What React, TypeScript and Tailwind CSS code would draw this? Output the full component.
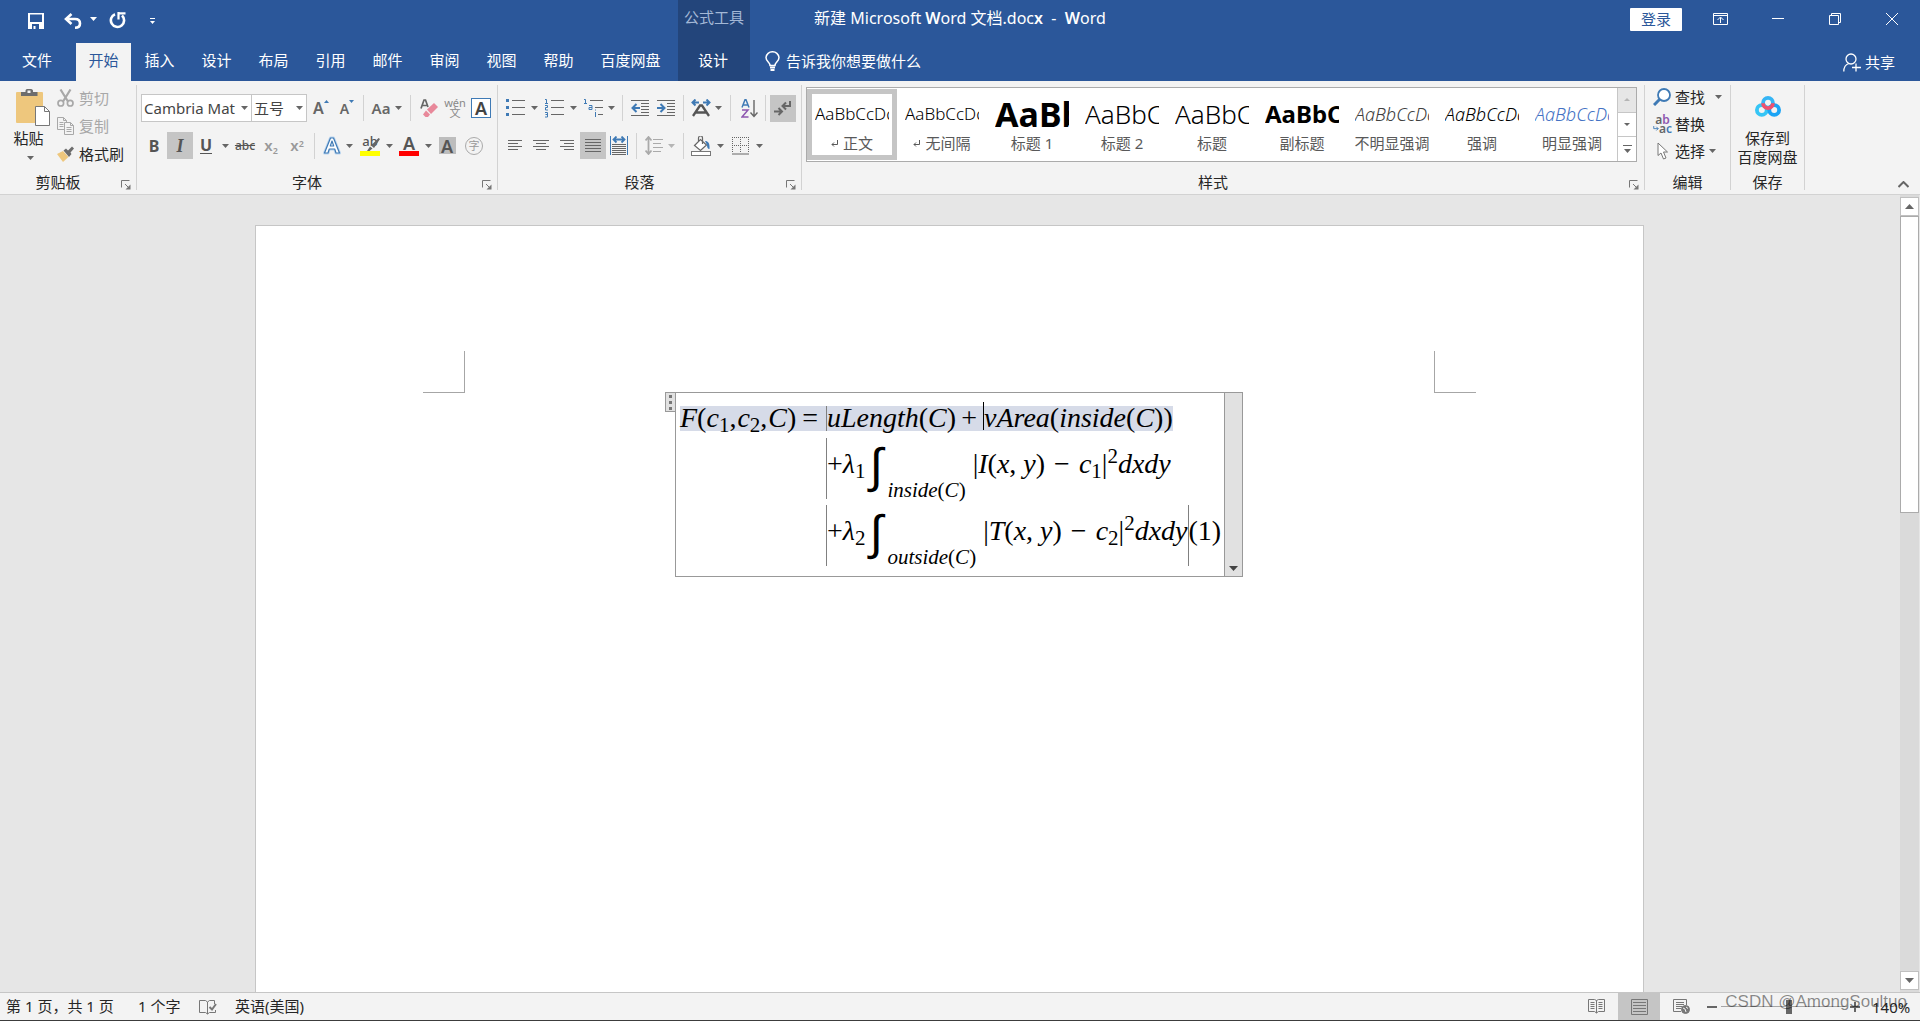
import React from "react";

const cjk = "font-['Noto_Sans','Noto_Sans_CJK_SC',sans-serif]";

/* ---------- shared pieces ---------- */

function Caret({ className = "text-[#666]" }: { className?: string }) {
  return (
    <svg width="7" height="4" viewBox="0 0 7 4" className={className} aria-hidden="true">
      <path d="M0 0h7L3.5 4z" fill="currentColor" />
    </svg>
  );
}

function Tool({ label, className = "w-[26px]", children }: { label: string; className?: string; children: React.ReactNode }) {
  return (
    <button aria-label={label} className={`flex h-[27px] shrink-0 items-center justify-center ${className}`}>
      {children}
    </button>
  );
}

function Drop({ label, className = "w-3", tone }: { label: string; className?: string; tone?: string }) {
  return (
    <Tool label={label} className={className}>
      <Caret className={tone} />
    </Tool>
  );
}

function Sep({ className }: { className: string }) {
  return <div className={`h-[26px] w-px shrink-0 bg-[#d2d2d2] ${className}`} />;
}

function Group({ name, className, launcher = true, children }: { name: string; className: string; launcher?: boolean; children: React.ReactNode }) {
  return (
    <section aria-label={name} className={`flex shrink-0 flex-col ${className}`}>
      <div className="flex-1">{children}</div>
      <div className="flex h-[23px] items-center">
        <span className="flex-1 pb-[2px] text-center leading-5">{name}</span>
        {launcher && (
          <button aria-label={`${name}选项`} className="flex w-5 justify-center pt-1">
            <svg width="10" height="10" viewBox="0 0 10 10" fill="none" stroke="#777">
              <path d="M.5 7.5v-7h8M4 4l4 4" />
              <path d="M9.500 4.500v5h-5z" fill="#777" stroke="none" />
            </svg>
          </button>
        )}
      </div>
    </section>
  );
}

function Divider() {
  return <div className="my-1 w-px shrink-0 bg-[#d2d2d2]" />;
}

/* ---------- title bar and tabs ---------- */

function TitleBar() {
  return (
    <div className="grid h-[43px] grid-cols-[1fr_auto_1fr]">
      <div className="flex min-w-0">
        <div className="flex w-[678px] shrink-0 items-center pb-[2px] pl-7">
          <button aria-label="保存">
            <svg width="16" height="16" viewBox="0 0 16 16">
              <path fillRule="evenodd" fill="#fff" d="M0 0h16v16H0zM2 1.500v7.500h12V1.500zM4 11v5h1.500v-3h2v3H11v-5z" />
            </svg>
          </button>
          <button aria-label="撤消" className="ml-5">
            <svg width="18" height="16" viewBox="0 0 18 16" fill="none" stroke="#fff" strokeWidth="2.600">
              <path d="M2 6h9c3 0 5 1.500 5 4.500S14 14.700 11 14.700" />
              <path d="M7.500 1 2 6l5.500 5" />
            </svg>
          </button>
          <button aria-label="撤消选项" className="ml-2 pb-1">
            <Caret className="text-white" />
          </button>
          <button aria-label="重复" className="ml-3">
            <svg width="18" height="17" viewBox="0 0 18 17" fill="none" stroke="#fff" strokeWidth="2.600">
              <path d="M6 2.200A6.600 6.600 0 1 0 13 3.500" />
              <path d="M9.500 0v7.500M8.500 1.300h8" strokeWidth="2.200" />
            </svg>
          </button>
          <button aria-label="自定义快速访问工具栏" className="ml-[23px] flex flex-col items-center gap-[2px]">
            <span className="h-px w-[5px] bg-white" />
            <svg width="5" height="3" viewBox="0 0 5 3"><path d="M0 0h5L2.500 3z" fill="#fff" /></svg>
          </button>
        </div>
        <div className="flex w-[72px] shrink-0 justify-center bg-[#23457b] pt-[7px] leading-5 text-[#a3b8d6]">
          <span className="whitespace-nowrap">公式工具</span>
        </div>
      </div>
      <h1 className="whitespace-pre pt-2 text-base leading-5 text-white">
        新建 Microsoft <b className="font-semibold">W</b>ord 文档.doc<b className="font-semibold">x</b>  -  <b className="font-semibold">W</b>ord
      </h1>
      <div className="flex h-[38px] items-center justify-end">
        <button className="mr-[10px] h-[23px] w-[52px] rounded-[1px] bg-white leading-5 text-[#2b579a]">登录</button>
        <button aria-label="功能区显示选项" className="flex w-[57px] justify-center">
          <svg width="15" height="12" viewBox="0 0 15 12" fill="none" stroke="#fff"><path d="M.5.5h14v11H.5zM.5 2.500h14M7.500 10V4.500M4.500 7l3-3 3 3" /></svg>
        </button>
        <button aria-label="最小化" className="flex w-[57px] justify-center">
          <svg width="12" height="12" viewBox="0 0 12 12" stroke="#fff"><path d="M0 5.500h12" /></svg>
        </button>
        <button aria-label="向下还原" className="flex w-[57px] justify-center">
          <svg width="12" height="12" viewBox="0 0 12 12" fill="none" stroke="#fff"><path d="M.5 2.500h9v9h-9zM2.500 2.500v-2h9v9h-2" /></svg>
        </button>
        <button aria-label="关闭" className="flex w-[57px] justify-center">
          <svg width="12" height="12" viewBox="0 0 12 12" stroke="#fff"><path d="M0 0l12 12M12 0 0 12" /></svg>
        </button>
      </div>
    </div>
  );
}

function TabBar() {
  const tabs = ["插入", "设计", "布局", "引用", "邮件", "审阅", "视图", "帮助", "百度网盘"];
  return (
    <nav className="flex h-[38px] items-stretch leading-5 text-white">
      <button className="w-[76px] pb-1 pr-[2px]">文件</button>
      <button className="w-[55px] bg-[#f3f3f3] pb-1 text-[#2b579a]">开始</button>
      {tabs.map((t) => (
        <button key={t} className={`whitespace-nowrap pb-1 ${t.length > 2 ? "w-[87px]" : "w-[57px]"}`}>{t}</button>
      ))}
      <button className="ml-1 w-[72px] bg-[#23457b] pb-1 pr-[2px]">设计</button>
      <button className="ml-[15px] flex items-center gap-[6px] pb-[2px]">
        <svg width="15" height="20" viewBox="0 0 15 20" fill="none" stroke="#fff" strokeWidth="1.500">
          <path d="M5 14.500c0-3-4-4-4-8A6.300 6.300 0 0 1 7.500.8 6.300 6.300 0 0 1 14 6.500c0 4-4 5-4 8z" />
          <path d="M5 16.500h5M5.500 19h4" strokeWidth="2" />
        </svg>
        告诉我你想要做什么
      </button>
      <button className="ml-auto mr-[25px] flex items-center gap-1">
        <svg width="18" height="19" viewBox="0 0 18 19" fill="none" stroke="#fff" strokeWidth="1.300">
          <circle cx="8" cy="6" r="5" />
          <path d="M.8 18.500c0-4 2-7 5-8M13 10.500v8M9 14.500h9" />
        </svg>
        共享
      </button>
    </nav>
  );
}

/* ---------- ribbon groups ---------- */

function Clipboard() {
  return (
    <Group name="剪贴板" className="w-[136px]">
      <div className="flex">
        <button className="flex w-[57px] flex-col items-center pt-[7px]">
          <svg width="36" height="38" viewBox="0 0 36 38" className="ml-2">
            <rect x="1" y="4" width="27" height="31" rx="1" fill="#eec77d" />
            <path d="M6 8V4h4.500V2.500A2 2 0 0 1 12 1h4a2 2 0 0 1 2 1.500V4h4.500v4z" fill="#6d6d6d" />
            <rect x="12.500" y="2.500" width="3" height="2.500" fill="#f3f3f3" />
            <path d="M20.500 18.500h9l5 5v14h-14z" fill="#fff" stroke="#777" />
            <path d="M29.500 18.500v5h5" fill="none" stroke="#777" />
          </svg>
          <span className="mt-[2px] leading-5">粘贴</span>
          <span className="ml-1 mt-2"><Caret /></span>
        </button>
        <div className="flex flex-col gap-2 pt-[7px]">
          <button className="flex h-5 items-center gap-[5px] leading-5 text-[#a8a8a8]">
            <svg width="17" height="18" viewBox="0 0 17 18" fill="none" stroke="#a8a8a8">
              <path d="M3.500.5l7.500 12M13.500.5l-7.500 12" strokeWidth="2.200" />
              <circle cx="3.800" cy="14.200" r="2.800" strokeWidth="1.700" />
              <circle cx="13.200" cy="14.200" r="2.800" strokeWidth="1.700" />
            </svg>
            剪切
          </button>
          <button className="flex h-5 items-center gap-[5px] leading-5 text-[#a8a8a8]">
            <svg width="17" height="18" viewBox="0 0 17 18" fill="#f3f3f3" stroke="#a8a8a8">
              <path d="M.5.5h6l3 3v9h-9zM6.500.5v3h3M2.500 5.500h4M2.500 7.500h4M2.500 9.500h4" />
              <path d="M7.500 5.500h6l3 3v9h-9zM13.500 5.500v3h3M9.500 10.500h5M9.500 12.500h5M9.500 14.500h5" />
            </svg>
            复制
          </button>
          <button className="flex h-5 items-center gap-[5px] leading-5">
            <svg width="17" height="16" viewBox="0 0 17 16">
              <path d="M0 8 6 5l5.500 6L6 16z" fill="#eec77d" />
              <path d="M6.500 4.500 9 2.500l2 2L15 .5 17 2.500l-3.500 4 1 1.500-2.500 3z" fill="#6d6d6d" />
            </svg>
            格式刷
          </button>
        </div>
      </div>
    </Group>
  );
}

function FontGroup() {
  const box = "h-7 appearance-none border border-[#c6c6c6] bg-white text-[#444] outline-none";
  return (
    <Group name="字体" className="w-[360px]">
      <div className="flex flex-col gap-[10px] pl-1 pt-[13px]">
        <div className="flex h-7 items-center">
          <div className="relative flex">
            <select aria-label="字体名称" className={`${box} w-[111px] pl-[2px]`}>
              <option>Cambria Mat</option>
            </select>
            <span className="pointer-events-none absolute right-1 top-3"><Caret /></span>
          </div>
          <div className="relative -ml-px flex">
            <select aria-label="字号" className={`${box} w-[56px] pl-[2px]`}>
              <option>五号</option>
            </select>
            <span className="pointer-events-none absolute right-1 top-3"><Caret /></span>
          </div>
          <Tool label="增大字号" className="ml-px w-[26px]">
            <span className="text-base font-semibold leading-5 text-[#666]">A</span>
            <svg width="5" height="3" viewBox="0 0 5 3" className="-mt-[14px]"><path d="M0 3h5L2.500 0z" fill="#3f7ab5" /></svg>
          </Tool>
          <Tool label="减小字号">
            <span className="pt-px text-sm font-semibold leading-5 text-[#666]">A</span>
            <svg width="5" height="3" viewBox="0 0 5 3" className="-mt-[14px]"><path d="M0 0h5L2.500 3z" fill="#3f7ab5" /></svg>
          </Tool>
          <Sep className="ml-[3px]" />
          <Tool label="更改大小写" className="w-[46px] gap-[5px]">
            <span className="font-semibold leading-5 text-[#666]">Aa</span>
            <Caret />
          </Tool>
          <Sep className="" />
          <Tool label="清除所有格式" className="ml-[5px] w-[26px]">
            <svg width="18" height="19" viewBox="0 0 18 19">
              <path d="M1 9.500 4 1h1.500L8 8M2 6.500h5" fill="none" stroke="#666" strokeWidth="1.700" />
              <path d="M7 10.500 14 4l4 4-7 7z" fill="#e8889a" />
              <path d="M6 11.500 10 15.500l-2 2.500H5.500L3 15.500z" fill="#e8889a" />
            </svg>
          </Tool>
          <Tool label="拼音指南" className="w-[26px] flex-col">
            <span className="text-[11px] leading-[10px] text-[#888]">wén</span>
            <span className="text-[11px] leading-[10px] text-[#888]">文</span>
          </Tool>
          <Tool label="字符边框">
            <span className="flex size-5 items-center justify-center border border-[#3f7ab5] bg-white text-lg font-semibold text-[#444]">A</span>
          </Tool>
        </div>
        <div className="flex h-[27px] items-center text-[#555]">
          <Tool label="加粗"><span className="text-base font-bold">B</span></Tool>
          <Tool label="倾斜" className="w-[26px] bg-[#c5c5c5]">
            <span className="font-['Liberation_Serif',serif] text-lg font-bold italic">I</span>
          </Tool>
          <Tool label="下划线"><span className="border-b border-[#555] text-base font-bold leading-4">U</span></Tool>
          <Drop label="下划线选项" className="w-[13px]" />
          <Tool label="删除线"><span className="text-xs font-medium line-through">abc</span></Tool>
          <Tool label="下标"><span className="font-semibold text-[#999]">x<sub className="text-[9px]">2</sub></span></Tool>
          <Tool label="上标"><span className="font-semibold text-[#999]">x<sup className="text-[9px]">2</sup></span></Tool>
          <Sep className="ml-1" />
          <Tool label="文本效果" className="ml-1 w-[25px]">
            <svg width="18" height="19" viewBox="0 0 18 19" fill="none" strokeLinejoin="round">
              <path d="M1.500 17 7.500 2h3l6 15h-3.500l-1.300-4H6.300L5 17z" stroke="#bcd6ef" strokeWidth="3" />
              <path d="M1.500 17 7.500 2h3l6 15h-3.500l-1.300-4H6.300L5 17zM7.300 10 9 5l1.700 5z" fill="#fff" stroke="#3f7ab5" strokeWidth="1.200" />
            </svg>
          </Tool>
          <Drop label="文本效果选项" className="w-[11px]" />
          <Tool label="突出显示" className="ml-[2px] w-[26px] flex-col">
            <span className="relative h-4 text-[13px] font-medium leading-3">
              ab
              <svg width="14" height="14" viewBox="0 0 14 14" className="absolute left-1 top-[3px]"><path d="M14 1 8 10l-3-2.500L12.500 0zM4 8.500l2.500 2L3.500 13H1z" fill="#666" /></svg>
            </span>
            <span className="h-[5px] w-5 bg-[#ffff00]" />
          </Tool>
          <Drop label="突出显示颜色" />
          <Tool label="字体颜色" className="ml-px w-[26px] flex-col">
            <span className="h-4 text-lg font-semibold leading-4">A</span>
            <span className="h-[5px] w-5 bg-[#ff0000]" />
          </Tool>
          <Drop label="字体颜色选项" />
          <Tool label="字符底纹"><span className="flex h-[17px] w-[17px] items-center justify-center bg-[#bdbdbd] text-lg font-semibold">A</span></Tool>
          <Tool label="带圈字符" className="ml-px w-[26px]">
            <span className="flex size-[18px] items-center justify-center rounded-full border border-[#aaa] text-[11px] leading-none text-[#999]">字</span>
          </Tool>
        </div>
      </div>
    </Group>
  );
}

function Lines({ rows, w = 16, h = 11 }: { rows: [number, number][]; w?: number; h?: number }) {
  return (
    <svg width={w} height={h} viewBox={`0 0 ${w} ${h}`} stroke="#666" aria-hidden="true">
      {rows.map(([a, b], i) => <path key={i} d={`M${a} ${i * 3 + 0.5}H${b}`} />)}
    </svg>
  );
}

function ListIcon({ kind }: { kind: "bullet" | "number" | "multi" }) {
  const rows = [1.5, 8.5, 15.5];
  return (
    <svg width="19" height="19" viewBox="0 0 19 19" fill="none" aria-hidden="true">
      {kind === "bullet" && rows.map((y) => <g key={y}><rect x="0" y={y - 1.5} width="3" height="3" fill="#3f7ab5" /><path d={`M6 ${y}h13`} stroke="#666" /></g>)}
      {kind === "number" && (
        <>
          {rows.map((y) => <path key={y} d={`M6 ${y}h13`} stroke="#666" />)}
          <path d="M0 .5h1.500v3.500M0 4.500h3M0 6.500h2.500v2H.5v2.500H3M0 13.500h2.500v4.500H0M.5 15.500h2" stroke="#3f7ab5" />
        </>
      )}
      {kind === "multi" && (
        <>
          <path d="M6 1.500h13M11 8.500h8M14 15.500h5" stroke="#666" />
          <path d="M0 .5h1.500v3.500M0 4.500h3M5 6.500h3v4H5v-2h3M11.500 13v5M11.500 10.500v1" stroke="#3f7ab5" />
        </>
      )}
    </svg>
  );
}

function Paragraph() {
  return (
    <Group name="段落" className="w-[303px]">
      <div className="flex flex-col gap-[10px] pl-1 pt-[13px]">
        <div className="flex h-7 items-center">
          <Tool label="项目符号"><ListIcon kind="bullet" /></Tool>
          <Drop label="项目符号选项" />
          <Tool label="编号" className="ml-px w-[26px]"><ListIcon kind="number" /></Tool>
          <Drop label="编号选项" />
          <Tool label="多级列表" className="ml-px w-[26px]"><ListIcon kind="multi" /></Tool>
          <Drop label="多级列表选项" className="w-[10px]" />
          <Sep className="ml-[6px]" />
          <Tool label="减少缩进量" className="ml-1 w-[26px]">
            <svg width="18" height="17" viewBox="0 0 18 17" fill="none" stroke="#666">
              <path d="M0 .5h18M10 3.500h8M10 6.500h8M10 9.500h8M10 12.500h8M0 15.500h18" />
              <path d="M9 8H2M5.500 4 1.500 8l4 4" stroke="#3f7ab5" strokeWidth="2" />
            </svg>
          </Tool>
          <Tool label="增加缩进量">
            <svg width="18" height="17" viewBox="0 0 18 17" fill="none" stroke="#666">
              <path d="M0 .5h18M10 3.500h8M10 6.500h8M10 9.500h8M10 12.500h8M0 15.500h18" />
              <path d="M0 8h7M3.500 4l4 4-4 4" stroke="#3f7ab5" strokeWidth="2" />
            </svg>
          </Tool>
          <Sep className="ml-1" />
          <Tool label="中文版式" className="ml-[5px] w-6">
            <svg width="20" height="18" viewBox="0 0 20 18" fill="none">
              <path d="M2 17 9 6.500h2L18 17M5 13.500h10" stroke="#555" strokeWidth="2.300" />
              <path d="M8 3.500H1.500M4.500.5l-3 3 3 3M12 3.500h6.500M15.500.5l3 3-3 3" stroke="#3f7ab5" strokeWidth="2" />
            </svg>
          </Tool>
          <Drop label="中文版式选项" className="w-[11px]" />
          <Sep className="ml-[6px]" />
          <Tool label="排序" className="ml-[5px] w-[26px]">
            <svg width="17" height="19" viewBox="0 0 17 19" fill="none">
              <path d="M1 8.500 4 .8h1L8 8.500M2 6h5" stroke="#3f7ab5" strokeWidth="1.500" />
              <path d="M1 11h6L1 18h6.500" stroke="#8e57b0" strokeWidth="1.500" />
              <path d="M13 1v16M9.500 13.500l3.500 4 3.500-4" stroke="#666" strokeWidth="1.400" />
            </svg>
          </Tool>
          <Sep className="ml-[3px]" />
          <Tool label="显示/隐藏编辑标记" className="ml-1 w-[26px] bg-[#c5c5c5]">
            <svg width="18" height="16" viewBox="0 0 18 16" fill="none" stroke="#666" strokeWidth="2">
              <path d="M16 1v5H9M12 2.500 8.500 6 12 9.500" />
              <path d="M0 11.500h7M4.500 8 8 11.500 4.500 15" />
            </svg>
          </Tool>
        </div>
        <div className="flex h-[27px] items-center">
          <Tool label="左对齐"><Lines rows={[[1, 15], [1, 11], [1, 15], [1, 11]]} /></Tool>
          <Tool label="居中"><Lines rows={[[0, 16], [3, 13], [0, 16], [3, 13]]} /></Tool>
          <Tool label="右对齐"><Lines rows={[[1, 15], [5, 15], [1, 15], [5, 15]]} /></Tool>
          <Tool label="两端对齐" className="w-[26px] bg-[#c5c5c5]"><Lines w={16} h={14} rows={[[0, 16], [0, 16], [0, 16], [0, 16], [0, 16]]} /></Tool>
          <Tool label="分散对齐">
            <svg width="18" height="19" viewBox="0 0 18 19" fill="none">
              <path d="M.5 0v19M17.500 0v19" stroke="#3f7ab5" />
              <path d="M4 3.500h10M6.500.5l-3 3 3 3M11.500.5l3 3-3 3" stroke="#3f7ab5" strokeWidth="1.800" />
              <path d="M2 8.500h14M2 10.500h14M2 12.500h14M2 14.500h14M2 16.500h14M2 18.500h14" stroke="#666" />
            </svg>
          </Tool>
          <Sep className="ml-1" />
          <Tool label="行距" className="ml-1 w-[26px]">
            <svg width="18" height="19" viewBox="0 0 18 19" fill="none" stroke="#aaa">
              <path d="M8 3.500h10M8 7.500h8M8 11.500h10M8 15.500h8" />
              <path d="M3.500 1v17M.5 4.500l3-3.500 3 3.500M.5 14.500l3 3.500 3-3.500" strokeWidth="1.800" />
            </svg>
          </Tool>
          <Drop label="行距选项" className="w-[9px]" tone="text-[#b5b5b5]" />
          <Sep className="ml-[7px]" />
          <Tool label="底纹" className="ml-1 w-[26px]">
            <svg width="20" height="20" viewBox="0 0 20 20" fill="none">
              <rect x=".5" y="15.500" width="19" height="4" fill="#fff" stroke="#777" />
              <path d="M3.500 9.500 9.500 3.500l6 5.500-6 5.500z" fill="#fff" stroke="#666" strokeWidth="1.200" />
              <path d="M7.500 5V2a2 2 0 0 1 4 0v6" stroke="#666" strokeWidth="1.200" />
              <path d="M14 5c3 0 5 2 4.500 8-2 0-2.500-2-2.500-4z" fill="#3f7ab5" />
            </svg>
          </Tool>
          <Drop label="底纹颜色" />
          <Tool label="边框" className="ml-px w-[26px]">
            <svg width="17" height="18" viewBox="0 0 17 18" fill="none" stroke="#666">
              <path d="M.5 0v16M16.500 0v16M8.500 0v16M0 .5h17M0 8.500h17" strokeDasharray="1 1" />
              <path d="M0 17h17" />
            </svg>
          </Tool>
          <Drop label="边框选项" />
        </div>
      </div>
    </Group>
  );
}

const styles: { name: string; text: string; sample: string; mark?: boolean }[] = [
  { name: "正文", text: "AaBbCcDd", sample: "text-[17px] font-light text-black", mark: true },
  { name: "无间隔", text: "AaBbCcDd", sample: "text-[17px] font-light text-black", mark: true },
  { name: "标题 1", text: "AaBb", sample: "text-[34px] font-bold text-black" },
  { name: "标题 2", text: "AaBbC", sample: "text-[26px] font-light text-black" },
  { name: "标题", text: "AaBbC", sample: "text-[26px] font-light text-black" },
  { name: "副标题", text: "AaBbC", sample: "text-2xl font-bold text-black" },
  { name: "不明显强调", text: "AaBbCcDd", sample: "text-lg font-light italic text-[#404040]" },
  { name: "强调", text: "AaBbCcDd", sample: "text-lg font-light italic text-black" },
  { name: "明显强调", text: "AaBbCcDd", sample: "text-lg font-light italic text-[#4472c4]" },
];

function Styles() {
  return (
    <Group name="样式" className="w-[842px]">
      <div className="ml-1 mt-[6px] flex h-[75px] w-[831px] border border-[#ababab] bg-white">
        {styles.map((s, i) => (
          <button
            key={s.name}
            className={`my-px flex w-[90px] shrink-0 flex-col items-center justify-end border-[5px] pb-[2px] ${i === 0 ? "border-[#c5c5c5]" : "border-transparent"}`}
          >
            <span className={`flex h-[38px] w-[74px] items-center overflow-hidden whitespace-nowrap leading-[36px] ${s.sample}`}>{s.text}</span>
            <span className="flex h-5 items-center gap-[5px] whitespace-nowrap leading-5 text-[#595959]">
              {s.mark && (
                <svg width="7" height="7" viewBox="0 0 7 7" fill="none" stroke="#595959"><path d="M6.500 0v4.500H1M3 2.500l-2 2 2 2" /></svg>
              )}
              {s.name}
            </span>
          </button>
        ))}
        <div className="flex flex-1 flex-col divide-y divide-[#c6c6c6] border-l border-[#c6c6c6]">
          <button aria-label="向上" className="flex flex-1 items-center justify-center bg-[#e6e6e6]">
            <svg width="6" height="3" viewBox="0 0 6 3"><path d="M0 3h6L3 0z" fill="#b5b5b5" /></svg>
          </button>
          <button aria-label="向下" className="flex flex-1 items-center justify-center">
            <svg width="6" height="3" viewBox="0 0 6 3"><path d="M0 0h6L3 3z" fill="#666" /></svg>
          </button>
          <button aria-label="其他" className="flex flex-1 flex-col items-center justify-center gap-[3px]">
            <span className="h-px w-[9px] bg-[#666]" />
            <Caret />
          </button>
        </div>
      </div>
    </Group>
  );
}

function Editing() {
  return (
    <Group name="编辑" className="w-[85px]" launcher={false}>
      <div className="flex flex-col gap-[7px] pl-2 pt-[6px]">
        <button className="flex h-5 items-center leading-5">
          <svg width="18" height="18" viewBox="0 0 18 18" fill="none" stroke="#3f7ab5">
            <circle cx="11" cy="7" r="6" strokeWidth="1.800" fill="#fff" />
            <path d="M6.500 11.500 1 17" strokeWidth="3" />
          </svg>
          <span className="ml-1">查找</span>
          <span className="ml-[10px]"><Caret /></span>
        </button>
        <button className="flex h-5 items-center leading-5">
          <span className="flex w-[19px] flex-col text-xs font-semibold leading-[9px] text-[#666]">
            <span>a<span className="text-[#8e57b0]">b</span></span>
            <span className="flex items-center">
              <svg width="8" height="8" viewBox="0 0 8 8" fill="none" stroke="#3f7ab5" strokeWidth="1.200"><path d="M1 0v3.500h6M4.500 1 7 3.500 4.500 6" /></svg>
              a<span className="text-[#3f7ab5]">c</span>
            </span>
          </span>
          <span className="ml-[3px]">替换</span>
        </button>
        <button className="flex h-5 items-center leading-5">
          <svg width="12" height="18" viewBox="0 0 12 18" className="ml-1" fill="#fff" stroke="#777">
            <path d="M1 1v12.500l3-2.500 2.500 6 2.500-1-2.500-6h4z" />
          </svg>
          <span className="ml-[6px]">选择</span>
          <span className="ml-1"><Caret /></span>
        </button>
      </div>
    </Group>
  );
}

function SaveTo() {
  return (
    <Group name="保存" className="w-[73px]" launcher={false}>
      <button className="flex w-full flex-col items-center pt-[15px]">
        <svg width="26" height="21" viewBox="0 0 26 21" fill="none" strokeWidth="3.800">
          <circle cx="13" cy="6.800" r="4.900" stroke="#35b5f5" />
          <circle cx="6.800" cy="14" r="4.900" stroke="#35c5f5" />
          <circle cx="19.200" cy="14" r="4.900" stroke="#1ba4f5" />
          <path d="M8.100 7.200a4.900 4.900 0 0 0 9.800 0" stroke="#f0506e" />
        </svg>
        <span className="mt-3 text-center leading-[19px]">保存到<br />百度网盘</span>
      </button>
    </Group>
  );
}

/* ---------- document ---------- */

const P = ({ children }: { children: string }) => <span className="not-italic">{children}</span>;

function Term({ index, fn, region }: { index: string; fn: string; region: string }) {
  return (
    <div className="flex h-[61px] whitespace-nowrap border-l border-[#808080]">
      <span className="mt-[13px]"><P>+</P>λ<sub className="not-italic">{index}</sub></span>
      <span className="ml-1 w-[18px] font-['DejaVu_Sans',sans-serif] text-[48px] font-extralight not-italic leading-[54px]">∫</span>
      <span className="mt-[43px] text-[21px] leading-[18px]">{region}<P>(</P>C<P>)</P></span>
      <span className="ml-[7px] mt-[13px]">
        <P>|</P>{fn}<P>(</P>x<P>,</P> y<P>)</P><span className="mx-[9px] not-italic">−</span>c<sub className="not-italic">{index}</sub><P>|</P><sup className="not-italic">2</sup>dxdy
      </span>
    </div>
  );
}

function Equation() {
  return (
    <div className="-mt-px ml-[409px] flex items-start">
      <button aria-label="移动公式" className="flex h-5 w-[10px] flex-col items-center justify-center gap-[3px] border border-r-0 border-[#999] bg-[#e1e1e1]">
        <span className="size-[3px] bg-[#777]" />
        <span className="size-[3px] bg-[#777]" />
        <span className="size-[3px] bg-[#777]" />
      </button>
      <div className="flex border border-[#999]">
        <div className="w-[548px] pb-[10px] pl-1 pt-[13px] font-['Liberation_Serif',serif] text-[28px] italic leading-[25px] text-black">
          <div className="flex h-[25px] w-[493px] whitespace-nowrap bg-[#d6dbe8] leading-[23px]">
            <div className="flex w-[146px] shrink-0 justify-between pr-2">
              <span>F<P>(</P>c<sub className="not-italic">1</sub><span className="mr-px not-italic">,</span>c<sub className="not-italic">2</sub><span className="mr-px not-italic">,</span>C<P>)</P></span>
              <P>=</P>
            </div>
            <div className="flex w-[157px] shrink-0 justify-between border-l border-[#808080] pr-[6px]">
              <span>uLength<P>(</P>C<P>)</P></span>
              <P>+</P>
            </div>
            <span className="-mt-1 h-7 w-px shrink-0 bg-black" />
            <span>vArea<P>(</P>inside<P>(</P>C<P>))</P></span>
          </div>
          <div className="ml-[146px] mt-[7px]"><Term index="1" fn="I" region="inside" /></div>
          <div className="ml-[146px] mt-[6px] flex">
            <Term index="2" fn="T" region="outside" />
            <span className="border-l border-[#808080] pt-[13px] not-italic">(1)</span>
          </div>
        </div>
        <button aria-label="公式选项" className="flex w-[18px] items-end justify-center border-l border-[#999] bg-[#e1e1e1] pb-[5px]">
          <svg width="9" height="5" viewBox="0 0 9 5"><path d="M0 0h9L4.500 5z" fill="#444" /></svg>
        </button>
      </div>
    </div>
  );
}

function Document() {
  return (
    <main className="flex min-h-0 flex-1 bg-[#e6e6e6]">
      <div className="flex min-w-0 flex-1 justify-center overflow-hidden pr-px pt-[30px]">
        <article className="w-[1389px] border border-b-0 border-[#c6c6c6] bg-white">
          <div className="mt-[125px] flex justify-between px-[167px]">
            <span className="size-[42px] border-b border-r border-[#a6a6a6]" />
            <span className="size-[42px] border-b border-l border-[#a6a6a6]" />
          </div>
          <Equation />
        </article>
      </div>
      <div className="mr-px flex w-[19px] shrink-0 flex-col bg-[#dadada] pb-[2px] pt-[2px]">
        <button aria-label="向上滚动" className="flex h-[19px] items-center justify-center border border-[#c0c0c0] bg-white">
          <svg width="9" height="5" viewBox="0 0 9 5"><path d="M0 5h9L4.500 0z" fill="#666" /></svg>
        </button>
        <div className="min-h-0 flex-1"><div className="h-[39.3%] border border-[#ababab] bg-white" /></div>
        <button aria-label="向下滚动" className="flex h-[19px] items-center justify-center border border-[#c0c0c0] bg-white">
          <svg width="9" height="5" viewBox="0 0 9 5"><path d="M0 0h9L4.500 5z" fill="#666" /></svg>
        </button>
      </div>
    </main>
  );
}

function StatusBar() {
  return (
    <footer className="relative flex h-[29px] shrink-0 items-center border-b border-t border-b-[#3c3c3c] border-t-[#c6c6c6] bg-[#f3f3f3] pl-[6px] leading-5">
      <span className="w-[132px] whitespace-nowrap pb-[2px]">第 1 页，共 1 页</span>
      <span className="w-[61px] whitespace-nowrap pb-[2px]">1 个字</span>
      <button aria-label="校对">
        <svg width="18" height="16" viewBox="0 0 18 16" fill="none" stroke="#777">
          <path d="M15.500 5V1.500h-5L8.500 3l-2-1.500h-6v12h6l2 1.500 2-1.500h6V11M8.500 3v12" />
          <path d="M10.500 8l2.500 2.500L17 5" strokeWidth="2" />
        </svg>
      </button>
      <button className="ml-[18px] whitespace-nowrap pb-px">英语(美国)</button>
      <div className="ml-auto flex h-full items-center">
        <button aria-label="阅读视图" className="flex w-[43px] justify-center">
          <svg width="17" height="15" viewBox="0 0 17 15" fill="none" stroke="#777">
            <path d="M8.500 1.500 6.500.5h-6v12h6l2 1.500 2-1.500h6V.5h-6zM8.500 1.500V14M2.500 3.500h4M2.500 5.500h4M2.500 7.500h4M2.500 9.500h4M10.500 3.500h4M10.500 5.500h4M10.500 7.500h4M10.500 9.500h4" />
          </svg>
        </button>
        <button aria-label="页面视图" className="flex h-full w-[42px] items-center justify-center bg-[#c5c5c5]">
          <svg width="17" height="16" viewBox="0 0 17 16" fill="none" stroke="#777"><path d="M.5.5h16v15H.5zM2 3.500h13M2 6.500h13M2 9.500h13M2 12.500h13" /></svg>
        </button>
        <button aria-label="Web 版式视图" className="ml-[13px]">
          <svg width="17" height="15" viewBox="0 0 17 15" fill="none" stroke="#777">
            <path d="M13.500 6V.5H.5v12H8M3 3.500h8M3 5.500h8M3 7.500h6M3 9.500h5" />
            <circle cx="12.500" cy="10.500" r="4" fill="#777" />
            <path d="M10 9l2 1 1 3M13 8l2 1.500" stroke="#f3f3f3" />
          </svg>
        </button>
        <button aria-label="缩小" className="ml-[17px] h-[2px] w-[10px] bg-[#666]" />
        <input
          type="range"
          aria-label="显示比例"
          min={0}
          max={100}
          defaultValue={54}
          className="ml-1 h-[14px] w-[126px] appearance-none bg-[linear-gradient(#a6a6a6,#a6a6a6)] bg-[length:100%_1px] bg-center bg-no-repeat [&::-webkit-slider-thumb]:h-[14px] [&::-webkit-slider-thumb]:w-[6px] [&::-webkit-slider-thumb]:appearance-none [&::-webkit-slider-thumb]:bg-[#666]"
        />
        <button aria-label="放大" className="ml-[3px]">
          <svg width="10" height="10" viewBox="0 0 10 10" stroke="#666" strokeWidth="2"><path d="M5 0v10M0 5h10" /></svg>
        </button>
        <button className="ml-3 w-[48px] text-left">140%</button>
      </div>
      <span className="pointer-events-none absolute -top-px right-[13px] font-['Liberation_Sans',sans-serif] text-[17px] text-black/45">CSDN @AmongSoultuo</span>
    </footer>
  );
}

export default function App() {
  return (
    <div className={`flex h-screen flex-col overflow-hidden text-[15px] text-[#262626] ${cjk}`}>
      <header className="shrink-0 bg-[#2b579a]">
        <TitleBar />
        <TabBar />
      </header>
      <div className="flex h-[114px] shrink-0 border-b border-[#d2d2d2] bg-[#f3f3f3]">
        <Clipboard />
        <Divider />
        <FontGroup />
        <Divider />
        <Paragraph />
        <Divider />
        <Styles />
        <Divider />
        <Editing />
        <Divider />
        <SaveTo />
        <Divider />
        <button aria-label="折叠功能区" className="mb-[6px] ml-auto mr-[11px] self-end">
          <svg width="11" height="7" viewBox="0 0 11 7" fill="none" stroke="#666" strokeWidth="2"><path d="M.5 6 5.500 1l5 5" /></svg>
        </button>
      </div>
      <Document />
      <StatusBar />
    </div>
  );
}
